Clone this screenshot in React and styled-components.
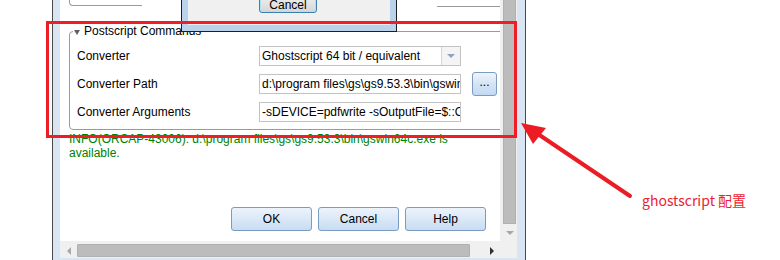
import React from "react";
import styled, { createGlobalStyle } from "styled-components";

const Global = createGlobalStyle`
  html, body { margin: 0; padding: 0; background: #ffffff; }
  body { font-family: "Liberation Sans", Arial, sans-serif; font-size: 12px; color: #000; }
  * { box-sizing: border-box; }
`;

const Stage = styled.div`
  position: relative;
  width: 780px;
  height: 260px;
  overflow: hidden;
  background: #fff;
`;

const Window = styled.div`
  margin-left: 52px;
  width: 474px;
  height: 260px;
  border-left: 1px solid #4a4a4a;
  border-right: 1px solid #4a4a4a;
  background: #d9e5f3;
  padding: 0 8px 2px 7px;
  display: grid;
  grid-template-columns: 440px 17px;
  grid-template-rows: 241px 17px;
`;

const Content = styled.div`
  background: #fff;
  overflow: hidden;
  position: relative;
`;

const TopRow = styled.div`
  display: flex;
  height: 7px;
`;

const TopBox = styled.div`
  margin-left: 9px;
  width: 73px;
  height: 6px;
  border-left: 1px solid #9a9a9a;
  border-bottom: 1px solid #9a9a9a;
  border-bottom-left-radius: 4px;
`;

const TopLine = styled.div`
  margin-left: 295px;
  flex: 1;
  height: 7px;
  border-bottom: 1px solid #9a9a9a;
`;

const Group = styled.fieldset`
  margin: 17px 0 0 9px;
  width: 460px;
  padding: 8px 0 7px 7px;
  border: 1px solid #9a9a9a;
  border-radius: 4px;
  min-width: 0;
`;

const Legend = styled.legend`
  padding: 0 3px 0 1px;
  margin-left: -4px;
  display: flex;
  align-items: center;
  gap: 4px;
  line-height: 14px;
  font-size: 12px;
`;

const Tri = styled.span`
  display: inline-block;
  width: 0;
  height: 0;
  border-left: 3px solid transparent;
  border-right: 3px solid transparent;
  border-top: 5px solid #606060;
  margin-top: 3px;
`;

const Rows = styled.div`
  display: grid;
  grid-template-columns: 182px 202px auto;
  grid-template-rows: repeat(3, 20px);
  row-gap: 8px;
  align-items: center;
`;

const Label = styled.div`
  line-height: 14px;
  white-space: nowrap;
`;

const Field = styled.div`
  height: 20px;
  border: 1px solid #c3c3c3;
  background: #fff;
  display: flex;
  align-items: center;
  overflow: hidden;
  white-space: nowrap;
  padding-left: 2px;
  grid-column: 2;
`;

const FieldText = styled.span`
  flex: 1;
  overflow: hidden;
  line-height: 14px;
`;

const DropBtn = styled.div`
  width: 19px;
  height: 100%;
  border-left: 1px solid #d6d6d6;
  background: #f4f4f4;
  display: flex;
  align-items: center;
  justify-content: center;
  &::after {
    content: "";
    width: 0;
    height: 0;
    border-left: 4px solid transparent;
    border-right: 4px solid transparent;
    border-top: 4px solid #8ea3bf;
  }
`;

const Browse = styled.button`
  grid-column: 3;
  margin-left: 11px;
  width: 25px;
  height: 24px;
  align-self: center;
  border: 1px solid #7b9cc1;
  border-radius: 3px;
  background: linear-gradient(#eef4fb, #d4e4f5 50%, #c4d9f1);
  font-family: "Liberation Sans", Arial, sans-serif;
  font-size: 12px;
  padding: 0 0 4px;
  color: #000;
  line-height: 1;
`;

const Info = styled.div`
  margin: 2px 0 0 9px;
  color: #008000;
  line-height: 14px;
  white-space: nowrap;
`;

const ButtonRow = styled.div`
  display: flex;
  justify-content: flex-end;
  gap: 6px;
  padding-right: 14px;
  margin-top: 47px;
`;

const Btn = styled.button`
  width: 81px;
  height: 24px;
  border: 1px solid #7b9cc1;
  border-radius: 3px;
  background: linear-gradient(#edf3fb, #dae8f7 50%, #c8dcf2);
  font-family: "Liberation Sans", Arial, sans-serif;
  font-size: 12px;
  color: #000;
  padding: 0;
`;

const VScroll = styled.div`
  background: #f0f0f0;
  display: flex;
  flex-direction: column;
  padding: 0 1px 0 3px;
`;

const VThumb = styled.div`
  height: 224px;
  background: #bcbcbc;
  border: 1px solid #b0b0b0;
  border-top: none;
`;

const ArrowCell = styled.div`
  flex: 1;
  display: flex;
  align-items: center;
  justify-content: center;
`;

const ArrowDown = styled.span`
  width: 0;
  height: 0;
  border-left: 4px solid transparent;
  border-right: 4px solid transparent;
  border-top: 4px solid #a8a8a8;
`;

const HScroll = styled.div`
  background: #f0f0f0;
  display: flex;
  align-items: center;
  padding-top: 2px;
`;

const ArrowH = styled.span`
  width: 17px;
  display: flex;
  justify-content: center;
  &::after {
    content: "";
    width: 0;
    height: 0;
    border-top: 4px solid transparent;
    border-bottom: 4px solid transparent;
    ${(p) =>
      p.$dir === "left"
        ? "border-right: 4px solid #a8a8a8;"
        : "border-left: 4px solid #303030;"}
  }
`;

const HThumb = styled.div`
  width: 393px;
  height: 13px;
  background: #bcbcbc;
  border: 1px solid #b0b0b0;
  border-radius: 1px;
  margin-right: 13px;
`;

const Corner = styled.div`
  background: #f0f0f0;
`;

const Dialog = styled.div`
  position: absolute;
  left: 181px;
  top: -40px;
  width: 216px;
  height: 72px;
  border: 1px solid #1e1e1e;
  background: #bad2eb;
  padding: 0 6px 6px 6px;
  z-index: 2;
`;

const DialogInner = styled.div`
  height: 100%;
  background: #f0f0f0;
  display: flex;
  align-items: flex-end;
  padding: 0 0 12px 71px;
`;

const DlgBtn = styled.button`
  width: 58px;
  height: 22px;
  border: 1px solid #3c7fb1;
  border-radius: 3px;
  box-shadow: inset 0 0 0 1px #a8e4f7;
  background: linear-gradient(#f2f2f2, #e6e6e6 50%, #d6d6d6);
  font-family: "Liberation Sans", Arial, sans-serif;
  font-size: 12px;
  color: #000;
  padding: 6px 0 0;
  line-height: 1;
`;

const Highlight = styled.div`
  position: absolute;
  left: 46px;
  top: 21px;
  width: 471px;
  height: 117px;
  border: 3px solid #ee1d26;
  z-index: 3;
  pointer-events: none;
`;

const Overlay = styled.svg`
  position: absolute;
  left: 0;
  top: 0;
  z-index: 4;
  pointer-events: none;
`;

const Note = styled.div`
  position: absolute;
  left: 642px;
  top: 190px;
  font-family: "Noto Sans CJK SC", "Noto Sans", sans-serif;
  font-size: 14px;
  line-height: 20px;
  color: #ec2232;
  z-index: 4;
  white-space: nowrap;
`;

export default function App() {
  return (
    <>
      <Global />
      <Stage>
        <Window>
          <Content>
            <TopRow>
              <TopBox />
              <TopLine />
            </TopRow>
            <Group>
              <Legend>
                <Tri />
                Postscript Commands
              </Legend>
              <Rows>
                <Label>Converter</Label>
                <Field>
                  <FieldText>Ghostscript 64 bit / equivalent</FieldText>
                  <DropBtn />
                </Field>
                <span />
                <Label>Converter Path</Label>
                <Field>
                  <FieldText>d:\program files\gs\gs9.53.3\bin\gswin64c.exe</FieldText>
                </Field>
                <Browse>...</Browse>
                <Label>Converter Arguments</Label>
                <Field>
                  <FieldText>-sDEVICE=pdfwrite -sOutputFile=$::OutputFile</FieldText>
                </Field>
                <span />
              </Rows>
            </Group>
            <Info>
              INFO(ORCAP-43006): d:\program files\gs\gs9.53.3\bin\gswin64c.exe is
              <br />
              available.
            </Info>
            <ButtonRow>
              <Btn>OK</Btn>
              <Btn>Cancel</Btn>
              <Btn>Help</Btn>
            </ButtonRow>
          </Content>
          <VScroll>
            <VThumb />
            <ArrowCell>
              <ArrowDown />
            </ArrowCell>
          </VScroll>
          <HScroll>
            <ArrowH $dir="left" />
            <HThumb />
            <ArrowH $dir="right" />
          </HScroll>
          <Corner />
        </Window>
        <Dialog>
          <DialogInner>
            <DlgBtn>Cancel</DlgBtn>
          </DialogInner>
        </Dialog>
        <Highlight />
        <Overlay width="780" height="260" viewBox="0 0 780 260">
          <line x1="630" y1="196" x2="532" y2="130" stroke="#ec1c24" strokeWidth="4" strokeLinecap="round" />
          <polygon points="521,123 546,128 533,144" fill="#ec1c24" />
        </Overlay>
        <Note>ghostscript 配置</Note>
      </Stage>
    </>
  );
}
